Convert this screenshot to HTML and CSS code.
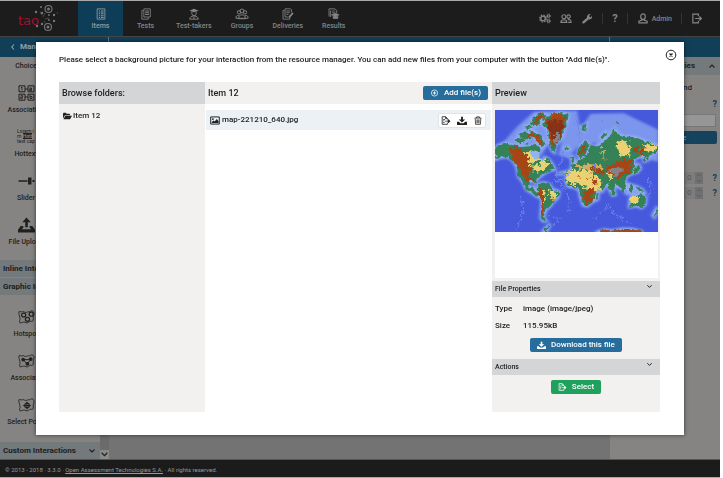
FILE: index.html
```html
<!DOCTYPE html>
<html lang="en">
<head>
<meta charset="utf-8">
<title>TAO - Resource manager</title>
<link rel="stylesheet" href="styles.css">
</head>
<body>
<svg class="sprite" aria-hidden="true">
  <symbol id="i-items" viewBox="0 0 12 14"><path d="M1.500 1h9v12h-9z" fill="none" stroke="currentColor"/><path d="M3.500 3.500h1.500M6 3.500h3M3.500 6h1.500M6 6h3M3.500 8.500h1.500M6 8.500h3M3.500 11h1.500M6 11h3" stroke="currentColor" stroke-width="1.300"/></symbol>
  <symbol id="i-tests" viewBox="0 0 12 14"><path d="M3.500 1h7.500v9.500h-7.500zM3 3H1.200v10h7.500v-2" fill="none" stroke="currentColor"/><path d="M5 3.500h4.500M5 5.500h4.500M5 7.500h4.500" stroke="currentColor" stroke-width="1.200"/></symbol>
  <symbol id="i-takers" viewBox="0 0 14 14"><path d="M7 1l5.500 2.200L7 5 1.500 3.200z" fill="currentColor"/><path d="M4.500 4.500v2a2.500 2.500 0 0 0 5 0v-2M2 13c.3-2.600 2-3.600 5-3.600s4.700 1 5 3.600zM6 11l1 1.500L8 11" fill="none" stroke="currentColor" stroke-width="1.100"/></symbol>
  <symbol id="i-groups" viewBox="0 0 16 14"><g fill="none" stroke="currentColor" stroke-width="1.100"><circle cx="4.500" cy="5" r="2"/><circle cx="11.500" cy="5" r="2"/><circle cx="8" cy="3.500" r="2.300"/><path d="M.8 12c0-2.500 1-3.500 3.700-3.500M15.200 12c0-2.500-1-3.500-3.700-3.500M4 12.500c0-3 1.300-4.500 4-4.500s4 1.500 4 4.500zM1 12h14"/></g></symbol>
  <symbol id="i-deliveries" viewBox="0 0 14 14"><path d="M9 10v3H1.200V3H3M3.500 1h6.500l1 1v3M3.500 1v9.500H7" fill="none" stroke="currentColor"/><path d="M5 3.500h4.500M5 5.500h4M5 7.500h2.500" stroke="currentColor"/><path d="M12 5l1.500 1.500L9.500 11 7.500 11.500 8 9.500z" fill="currentColor"/></symbol>
  <symbol id="i-results" viewBox="0 0 14 14"><path d="M1.200 10V1h7l2 2v3M3 10.500V3" fill="none" stroke="currentColor"/><path d="M4.500 3.500h4M4.500 5.500h4M4 8l4.500-1.800L13 8 8.500 9.800zM6 9.500v2.700h5.500V9.500" fill="currentColor" stroke="currentColor" stroke-width=".8"/></symbol>
  <symbol id="i-gears" viewBox="0 0 14 12"><circle cx="4.700" cy="6" r="2.700" fill="none" stroke="currentColor" stroke-width="1.600"/><circle cx="4.700" cy="6" r="4" fill="none" stroke="currentColor" stroke-width="1.400" stroke-dasharray="1.600 1.540"/><g fill="none" stroke="currentColor" stroke-width="1.200"><circle cx="11.200" cy="3" r="1.500"/><circle cx="11.200" cy="9" r="1.500"/></g><g fill="none" stroke="currentColor" stroke-width=".8" stroke-dasharray="1 1.100"><circle cx="11.200" cy="3" r="2.400"/><circle cx="11.200" cy="9" r="2.400"/></g></symbol>
  <symbol id="i-users" viewBox="0 0 14 12"><g fill="none" stroke="currentColor" stroke-width="1.300"><circle cx="4.500" cy="4" r="2.300"/><circle cx="10" cy="3.800" r="2"/><path d="M1 10.500c0-2.300 1-3 3.500-3s3.500.7 3.500 3zM9 7c3 0 4 1 4 3.500H9.500"/></g></symbol>
  <symbol id="i-wrench" viewBox="0 0 12 12"><path d="M1.200 9.400L6 5.200C5.500 3 7.500.7 10 1.300L8.300 3l.6 1.300 1.300.3L11.400 3c.8 2.300-1.300 4.500-3.700 4L3 11.200c-1.500.9-2.900-.8-1.800-1.800z" fill="currentColor"/></symbol>
  <symbol id="i-user" viewBox="0 0 12 12"><ellipse cx="6" cy="4" rx="2.500" ry="3" fill="none" stroke="currentColor" stroke-width="1.300"/><path d="M5 6.500v1.300L1.500 9v1.700h9V9L7 7.800V6.500" fill="none" stroke="currentColor" stroke-width="1.300"/></symbol>
  <symbol id="i-logout" viewBox="0 0 12 12"><path d="M7.500 3.500V1.200H1.500v9.600h6V8.500M4 6h6.500M8.500 3.800L10.800 6 8.500 8.200" fill="none" stroke="currentColor" stroke-width="1.300"/></symbol>
  <symbol id="i-up" viewBox="0 0 8 8"><path d="M1.500 5.500L4 3l2.500 2.500" fill="none" stroke="currentColor" stroke-width="1.100"/></symbol>
  <symbol id="i-down" viewBox="0 0 8 8"><path d="M1.500 2.500L4 5l2.500-2.500" fill="none" stroke="currentColor" stroke-width="1.100"/></symbol>
  <symbol id="i-left" viewBox="0 0 8 8"><path d="M5 1.500L2.800 4 5 6.500" fill="none" stroke="currentColor" stroke-width="1.100"/></symbol>
  <symbol id="i-download" viewBox="0 0 16 14"><path d="M6.500 1h3v4.500H13L8 10 3 5.500h3.500z" fill="currentColor"/><path d="M0 9h3l2.500 2.500h5L13 9h3v5H0z" fill="currentColor"/></symbol>
  <symbol id="i-upload" viewBox="0 0 16 14"><path d="M6.800 9V4.500H4L8 0l4 4.500H9.200V9z" fill="currentColor"/><path d="M0 11.500L2.500 8H5v1.500L3.500 11h9L11 9.500V8h2.500l2.500 3.500V14H0z" fill="currentColor"/></symbol>
  <symbol id="i-export" viewBox="0 0 14 13"><path d="M9 5V3.500L6.500 1H1.500v11H9v-2M6.300 1v2.800H9M3 5h2.500M3 7h1.500M3 9.500h2" fill="none" stroke="currentColor" stroke-width="1.200"/><path d="M5.500 7.500H11M10 5l3 2.500-3 2.500z" fill="currentColor" stroke="currentColor"/></symbol>
  <symbol id="i-trash" viewBox="0 0 12 13"><path d="M1 3h10M4 3V1.200h4V3M2 3.500l.5 8.500h7l.5-8.500M4.500 5v5.500M6 5v5.500M7.500 5v5.500" fill="none" stroke="currentColor" stroke-width="1.100"/></symbol>
  <symbol id="i-image" viewBox="0 0 14 12"><path d="M1 1h12v10H1z" fill="none" stroke="currentColor" stroke-width="1.400"/><circle cx="4" cy="4" r="1.300" fill="currentColor"/><path d="M2.500 9.500V8L5 6l1.500 1.500L9.500 4 12 7v2.500z" fill="currentColor"/></symbol>
  <symbol id="i-folder" viewBox="0 0 14 12"><path d="M0 10V2l1-1h3.500l1 1.500H10l1 1V5H3z" fill="currentColor"/><path d="M3.500 5.700H14L11 11H.7z" fill="currentColor"/></symbol>
  <symbol id="i-ring" viewBox="0 0 12 12"><circle cx="6" cy="6" r="4.800" fill="none" stroke="currentColor" stroke-width="1"/><path d="M4.500 4.500l3 3M7.500 4.500l-3 3" stroke="currentColor" stroke-width="1.300"/></symbol>
  <symbol id="i-add" viewBox="0 0 12 12"><circle cx="6" cy="6" r="4.600" fill="none" stroke="currentColor" stroke-width="1.100"/><path d="M6 3.700v4.600M3.700 6h4.600" stroke="currentColor" stroke-width="1.400"/></symbol>
  <symbol id="i-slider" viewBox="0 0 16 16"><path d="M0 7.200h9v1.600H0zM9.500 4.500h3.500v7H9.500zM14 7h2v2h-2z" fill="currentColor"/></symbol>
  <symbol id="i-map" viewBox="0 0 18 16"><path d="M1 2.500c1.500-1 2 .7 3.500 0s2 .5 3.500.7S10.500 2 12 2.500 13 1 15 1.500s2.500 3 1.500 5 .5 5.500-1 6-2-.5-3.500.5-2 1.500-3.500 1-2-1-4-.3-3 .8-2.800-.8.800-2.500.300-4.500S.5 4 1 2.500z" fill="none" stroke="currentColor" stroke-width=".9"/></symbol>
</svg>

<div class="app">
  <header class="topbar">
    <svg class="logo" viewBox="0 0 78 35" role="img" aria-label="tao">
      <g fill="none" stroke="#777" stroke-width="1.100"><circle cx="48.500" cy="8" r="3.500"/><circle cx="48" cy="26" r="3.500"/></g>
      <g fill="#777"><circle cx="48.500" cy="8" r="1.500"/><circle cx="48" cy="26" r="1.500"/><circle cx="41" cy="6" r="1"/><circle cx="36" cy="11" r="1.200"/><circle cx="42" cy="12" r="1.200"/><circle cx="37" cy="25" r="1.200"/><circle cx="42" cy="23" r="1.200"/><circle cx="54" cy="14" r="1.200"/><circle cx="54" cy="20" r="1.200"/><circle cx="49" cy="14" r=".9"/><circle cx="49" cy="19" r=".9"/><circle cx="57.500" cy="12" r=".5"/></g>
      <path d="M43 16l2-4M45 18l4-1M44 20l2 3M42 14l-2-3" stroke="#555" stroke-width=".8"/>
      <text x="18" y="24" class="logo-text">tao</text>
    </svg>
    <nav class="tabs">
      <a class="tab active" href="#items"><svg><use href="#i-items"/></svg>Items</a>
      <a class="tab" href="#tests"><svg><use href="#i-tests"/></svg>Tests</a>
      <a class="tab" href="#takers"><svg><use href="#i-takers"/></svg>Test-takers</a>
      <a class="tab" href="#groups"><svg><use href="#i-groups"/></svg>Groups</a>
      <a class="tab" href="#deliveries"><svg><use href="#i-deliveries"/></svg>Deliveries</a>
      <a class="tab" href="#results"><svg><use href="#i-results"/></svg>Results</a>
    </nav>
    <nav class="tools">
      <a href="#settings" aria-label="Settings"><svg><use href="#i-gears"/></svg></a>
      <a href="#users" aria-label="Users"><svg><use href="#i-users"/></svg></a>
      <a href="#tools" aria-label="Tools"><svg><use href="#i-wrench"/></svg></a>
      <a class="sep help" href="#help">?</a>
      <a class="sep user" href="#admin"><svg><use href="#i-user"/></svg>Admin</a>
      <a class="sep exit" href="#logout" aria-label="Log out"><svg><use href="#i-logout"/></svg></a>
    </nav>
  </header>

  <main class="workspace">
    <aside class="palette">
      <a class="bar" href="#manage"><svg><use href="#i-left"/></svg>Manage items</a>
      <div class="palette-body">
        <div class="palette-list">
          <div class="tiles first">
            <div class="tile short">Choice</div>
            <div class="tile"><svg viewBox="0 0 16 16"><g fill="none" stroke="currentColor"><path d="M.5.8h6v6h-6zM9.500.8h6v6h-6zM.5 9.200h6v6h-6zM9.500 9.200h6v6h-6zM6.500 4h3M6.500 12h3"/><path d="M2.500 3l1-1v3.500M11 3h2v2.500h-2V4h2M2.200 10.700h2v1.500h-2v1.500h2M11.500 10v3.500h2v-2h-2" stroke-width=".9"/></g></svg>Association</div>
            <div class="tile"><span class="hot">Lorem i<br>m <b>Hott</b><br>text cap</span>Hottext</div>
            <div class="tile"><svg><use href="#i-slider"/></svg>Slider</div>
            <div class="tile"><svg><use href="#i-upload"/></svg>File Upload</div>
          </div>
          <h2>Inline Interactions</h2>
          <h2>Graphic Interactions</h2>
          <div class="tiles">
            <div class="tile"><svg viewBox="0 0 18 16"><use href="#i-map"/><g fill="none" stroke="currentColor" stroke-width="1.300"><circle cx="6" cy="6" r="2.200"/><circle cx="14" cy="5" r="2.200"/><circle cx="10" cy="10.500" r="2.200"/></g></svg>Hotspot</div>
            <div class="tile"><svg viewBox="0 0 18 16"><use href="#i-map"/><path d="M5.500 6.500h8l-4 4.500z" stroke="currentColor" fill="none"/><g fill="currentColor"><circle cx="5.500" cy="6.500" r="2"/><circle cx="13.500" cy="6" r="2"/><circle cx="10" cy="11" r="2"/></g></svg>Associate</div>
            <div class="tile"><svg viewBox="0 0 18 16"><use href="#i-map"/><g fill="none" stroke="currentColor" stroke-width="1.200"><circle cx="9.500" cy="8.500" r="2.500"/><path d="M9.500 4.500v8M5.500 8.500h8"/></g></svg>Select Point</div>
          </div>
          <h2>Custom Interactions<svg><use href="#i-down"/></svg></h2>
        </div>
        <div class="scroll"><svg><use href="#i-down"/></svg></div>
      </div>
    </aside>
    <section class="canvas"><div class="bar"></div></section>
    <aside class="props">
      <div class="bar"></div>
      <h2>Interaction Properties<svg><use href="#i-up"/></svg></h2>
      <p>Background</p>
      <div class="field ask">?</div>
      <input class="path" type="text" aria-label="Background file">
      <button class="pick" type="button">Select image</button>
      <div class="field"><span class="spin">0<i><svg><use href="#i-up"/></svg><svg><use href="#i-down"/></svg></i></span>?</div>
      <div class="field"><span class="spin">0<i><svg><use href="#i-up"/></svg><svg><use href="#i-down"/></svg></i></span>?</div>
    </aside>
  </main>

  <footer class="foot">© 2013 - 2018 · 3.3.0 · <a href="#oat">Open Assessment Technologies S.A.</a> · All rights reserved.</footer>
</div>

<div class="modal" role="dialog" aria-label="Resource manager">
  <button class="close" type="button" aria-label="Close"><svg><use href="#i-ring"/></svg></button>
  <p class="intro">Please select a background picture for your interaction from the resource manager. You can add new files from your computer with the button "Add file(s)".</p>
  <div class="manager">
    <section class="folders">
      <h1>Browse folders:</h1>
      <a class="folder" href="#item12"><svg><use href="#i-folder"/></svg>Item 12</a>
    </section>
    <section class="files">
      <h1>Item 12 <button class="btn add" type="button"><svg><use href="#i-add"/></svg>Add file(s)</button></h1>
      <div class="file">
        <svg><use href="#i-image"/></svg><span>map-221210_640.jpg</span>
        <div class="acts">
          <button type="button" aria-label="Select"><svg><use href="#i-export"/></svg></button>
          <button type="button" aria-label="Download"><svg><use href="#i-download"/></svg></button>
          <button type="button" aria-label="Delete"><svg><use href="#i-trash"/></svg></button>
        </div>
      </div>
    </section>
    <section class="preview">
      <h1>Preview</h1>
      <div class="frame">
        <svg class="map" viewBox="14 29 489 367" preserveAspectRatio="none" role="img" aria-label="World map">
          <defs>
            <filter id="rough" x="-5%" y="-5%" width="110%" height="110%"><feTurbulence type="fractalNoise" baseFrequency=".07" numOctaves="3" seed="4" result="n"/><feDisplacementMap in="SourceGraphic" in2="n" scale="14" xChannelSelector="R" yChannelSelector="G"/></filter>
            <filter id="rough2" x="-5%" y="-5%" width="110%" height="110%"><feTurbulence type="fractalNoise" baseFrequency=".09" numOctaves="3" seed="9" result="n"/><feDisplacementMap in="SourceGraphic" in2="n" scale="26" xChannelSelector="R" yChannelSelector="G"/></filter>
            <filter id="soft"><feGaussianBlur stdDeviation="4"/></filter>
            <path id="lands" d="M22 136l20-8 25 6 22 6 30-2 18-5 13 14-12 14 4 14 14 9 6-13 12 5 12 16 8 16-22 5-12 8-16 12-10 14-6-5-12 1-3 14 10 7 8-5 3 14 12 11-6 6-14-11-18-11-10-22-14-18-4-25-10-20-16-12-20 0-20 8-8-8 18-6-12-6z
              M145 253l12-6 18 4 12 16 20 8-4 18-14 12-10 14-10 8-6 12-2 16 6 7-8 2-8-10 2-28 2-24-8-14-6-14z
              M163 54l20-12 30-7 22 8-4 20-8 22-6 22-12 17-10 14-3 19-8-8-6-18-4-24-4-22-14-14z
              M85 106l14-14 10 8 16 2-6 14-18 2zM126 56l14-14 22-4 8 8-16 14-10 14-14 4-8-10zM76 118l14-8 12 14-14 6zM120 88l16 8 16 14 14 22-6 9-12-9-13-18-14-8zM104 78l16-5 8 8-18 7z
              M262 163l8-26 14-14 14 8-8 18-6 20-14 6zM222 143l11-3 4 6-10 3zM241 172l7-4 7 17-9 4z
              M242 210l2-16 13-2 5-10 16-7 12-11 9-30 12 6 18-8 16-14 16-12 10-22 16 20 22 5 26 2 28 11 34 12 18 2-6 12-14 9-18 6-4 16-12-12-18 4-14 8 6 18-10 20-12 9-10 14 6 16-10 12-14-6-8-10-6 18 4 14-8 2-10-18-2-16-10 4-8 18-10-4-8-23-8-5-12 14-20 8-14-30 4-8-18 0-8-10-12 2-4 8-12-10-16 8z
              M231 226l18-14 24-3 18 8 16 2 12 26 17 8-16 20-6 16-8 17-16 13-12-4-8-24-3-20-14-9-20-3-7-16z
              M319 281l6-3-3 20-6 3zM419 297l12-12 14 2 6-8 16 16-2 18-12 11-14-7-22 4zM487 346l12-22 3 4-10 24zM389 249l8 3 12 18-6 2-12-14zM417 252l10 4-2 20-9-6zM437 263l18 4 8 11-12-2zM445 192l6 12-10 12-14 4zM460 160l5 18-4 10zM158 394l18-20 2 3-10 19zM320 396l20-7 26 3 30-5 30 1 28 6v6H320zM273 79l16-10-5 24zM330 110l18-16 2 5-14 18z"/>
            <clipPath id="landclip"><use href="#lands"/></clipPath>
          </defs>
          <rect x="14" y="29" width="489" height="367" fill="#4659dc"/>
          <g filter="url(#soft)" fill="#91adf3" stroke="#91adf3">
            <path d="M80 80L130 35l130-4 10 60 30-50 100-2 104 50v95l-50-10-100-40-80-10-40 50-30-10 10-40-30-10-30 50-60 30-70-50z" opacity=".72"/>
            <use href="#lands" stroke-width="9"/>
            <path d="M380 245l65 10 20 40-60-10z" opacity=".8"/>
          </g>
          <g filter="url(#rough2)" fill="none" stroke="#6d88ec" stroke-width="3"><path d="M220 150l-8 40-15 30 20 40 24 40-8 40M90 290l10 40-20 60M350 310l20 30 50 30M350 320l-40 40M470 230l15 40-20 40M220 230l-30 20M160 345l50 10-20 18-30 10M255 45l15 80"/></g>
          <g filter="url(#rough)">
            <use href="#lands" fill="#348158"/>
            <g clip-path="url(#landclip)"><g filter="url(#rough2)">
              <path d="M100 155l60 10 15 35-35 22-30-34zM228 212h76l30 34-4 24-26 4-50-14-30-20zM380 122l34 4 8 36-34 10zM415 285l20 2 15 18-36 10zM155 270l12 8-8 40zM178 270l22 6-4 26-16-2zM455 135l45-5v20l-40 6zM345 215h24l-6 25z" fill="#ead273"/>
              <path d="M260 194l60-2 20 10-10 8-70-4zM330 150l8-16 4 46z" fill="#cfae61"/>
              <path d="M52 145l30-4 20 23 14 10 4 28-4 30 24 20-24-2-40-50-12-40zM155 50l20 6 20-16 30 8-4 28-10 50-15 24-24-46-6-36zM130 54l28-12 5 12-30 18zM120 95l40 35-8 9-38-34zM146 260l12 10v75l-10-8zM281 276l30-10-4 38-20 16-10-20zM303 215l17 30-9 12zM345 203l56-28 25 8-10 30-35 24-34-22zM295 201l50 8-3 12-46-11zM430 140l36 8-16 20-18-13zM320 384h130v14H320zM282 130l4 16-17 18-5-2zM487 330l8 18z" fill="#a64516"/>
              <path d="M166 65l40-8 13 15-9 45-15 17-18-42z" fill="#853018"/>
              <path d="M198 92l12 8-2 25-10 14-8-20zM354 208l26-8 20 10-22 12-20-3z" fill="#858289"/>
              <path d="M262 230l8 4M290 232l10 3M320 288l3 8M440 155l10 4M190 288l-8 12" stroke="#b7621e" stroke-width="5"/>
              <path d="M245 248l30 6 14 10-10 8-14-8zM120 190l16-10 12 10-20 12z" fill="#348158"/>
            </g></g>
            <path d="M118 157l16-10 12 10 2 16-10 4-14-8z" fill="#8fb5ef"/><path d="M308 191l8 1 2 15-8-4z" fill="#6586e6"/>
            <g fill="#348158"><circle cx="104" cy="95" r="5"/><circle cx="120" cy="115" r="6"/><circle cx="96" cy="122" r="6"/><circle cx="110" cy="130" r="4"/><circle cx="382" cy="68" r="5"/><circle cx="397" cy="271" r="5"/><circle cx="336" cy="62" r="3"/></g>
          </g>
        </svg>
      </div>
      <h2>File Properties<svg><use href="#i-down"/></svg></h2>
      <dl><dt>Type</dt><dd>image (image/jpeg)</dd><dt>Size</dt><dd>115.95kB</dd></dl>
      <div class="center"><button class="btn" type="button"><svg><use href="#i-download"/></svg>Download this file</button></div>
      <h2 class="second">Actions<svg><use href="#i-down"/></svg></h2>
      <div class="center"><button class="btn select" type="button"><svg><use href="#i-export"/></svg>Select</button></div>
    </section>
  </div>
</div>
</body>
</html>
```
FILE: styles.css
```css
* { box-sizing: border-box; }
body { margin: 0; font: 500 8px/12px Roboto, "Liberation Sans", sans-serif; color: #222; background: #fff; }
h1, h2, p, dl, dd { margin: 0; font-size: 8px; }
a { color: inherit; text-decoration: none; }
button { font: inherit; color: inherit; border: 0; padding: 0; background: none; }
svg { flex: none; display: block; }
.sprite { position: absolute; width: 0; height: 0; }

.app { height: 100vh; margin-right: 3px; padding: 1px 0; display: flex; flex-direction: column; background: #aaa; }
.topbar { height: 36px; flex: none; display: flex; background: #1c1c1c; color: #858585; border-bottom: 1px solid #444; }
.logo { width: 78px; height: 35px; }
.logo-text { font: 400 13px "DejaVu Sans", sans-serif; fill: #a01030; }
.tabs { display: flex; }
.tab { min-width: 45px; padding: 7px 7px 0; display: flex; flex-direction: column; align-items: center; gap: 1px; font-size: 7px; line-height: 10px; }
.tab + .tab + .tab { padding: 7px 8px 0; }
.tab svg { width: 14px; height: 12px; }
.tab.active { background: #0e3d58; color: #999; }
.tools { margin-left: auto; padding-right: 17px; display: flex; align-items: center; gap: 9px; }
.tools svg { width: 12px; height: 11px; }
.sep { display: flex; align-items: center; gap: 3px; height: 11px; padding-left: 9px; border-left: 1px solid #333; font-size: 7px; }
.help { font-size: 11px; font-weight: 700; }

.workspace { flex: 1; min-height: 0; display: grid; grid-template-columns: 109px 1fr 110px; background: #737373; overflow: hidden; }
.bar { height: 20px; display: flex; align-items: center; background: #123f58; color: #8fa1ac; font-weight: 700; }
.palette { display: flex; flex-direction: column; min-height: 0; color: #202020; }
.palette .bar { padding-left: 9px; gap: 3px; border-right: 1px solid #5d7888; }
.bar svg { width: 8px; height: 8px; }
.palette-body { flex: 1; display: flex; background: #868482; }
.palette-list { flex: 1; display: flex; flex-direction: column; gap: 1px; }
.tiles { padding: 2px 0 11px; }
.tiles.first { padding: 0 0 9px; }
.tile { width: 52px; height: 44px; padding-top: 11px; display: flex; flex-direction: column; align-items: center; gap: 4px; font-size: 7px; line-height: 10px; white-space: nowrap; }
.tile.short { height: 17px; padding-top: 4px; }
.tile svg { width: 17px; height: 16px; }
.hot { height: 16px; font-size: 5px; line-height: 5px; font-weight: 400; }
.hot b { background: #222; color: #868482; }
.palette h2, .props h2 { height: 17px; display: flex; align-items: center; justify-content: space-between; padding: 0 4px 0 3px; background: #74797c; white-space: nowrap; }
.palette h2 svg, .props h2 svg { width: 8px; height: 8px; }
.scroll { width: 9px; background: #6b6b6b; display: flex; align-items: flex-end; }
.scroll svg { width: 9px; height: 9px; background: #8a8a8a; }
.canvas .bar { border-right: 1px solid #5d7888; }
.props { background: #868482; color: #222; text-align: right; }
.props h2 { height: 18px; justify-content: flex-end; gap: 13px; background: #74797c; }
.props p { padding: 7px 28px 0 0; font-weight: 500; }
.field { height: 15px; padding-right: 3px; display: flex; justify-content: flex-end; align-items: center; gap: 10px; color: #123f58; font-size: 9px; font-weight: 700; }
.field.ask { height: 20px; }
.path { display: block; width: 100px; height: 13px; margin: 0 4px 4px auto; border: 1px solid #777; background: #969696; }
.pick { display: block; width: 100px; height: 13px; margin: 0 3px 26px auto; border-radius: 2px; background: #15435e; color: #8fa1ac; padding-right: 8px; }
.spin { display: flex; align-items: center; gap: 3px; height: 12px; width: 60px; justify-content: flex-end; background: #7d7d7d; color: #555; font-size: 8px; font-weight: 400; }
.spin i { background: #707070; }
.spin svg { width: 8px; height: 6px; }
.foot { height: 18px; flex: none; padding-left: 5px; background: #1b1b1b; color: #999; border-top: 1px solid #555; font-size: 6px; line-height: 19px; font-weight: 400; }
.foot a { text-decoration: underline; }

.modal { position: fixed; inset: 42px 39px 43px 36px; padding: 12px 24px 23px 23px; display: flex; flex-direction: column; background: #fff; box-shadow: 0 0 4px rgba(0, 0, 0, .6); color: #222; }
.close { position: absolute; top: 7px; right: 7px; }
.close svg { width: 12px; height: 12px; }
.intro { padding-bottom: 16px; }
.manager { flex: 1; display: grid; grid-template-columns: 146px 1fr 168px; }
.manager h1 { height: 22px; padding: 0 4px 0 3px; display: flex; align-items: center; justify-content: space-between; background: #d3d5d6; font-size: 9px; font-weight: 500; }
.folders, .preview { background: #f2f1ef; }
.folder { display: flex; align-items: center; gap: 1px; padding: 6px 4px; }
.folder svg { width: 9px; height: 8px; }
.files h1 { background: #f2f1ef; }
.btn { height: 14px; padding: 0 7px; display: inline-flex; align-items: center; gap: 5px; border-radius: 2px; background: #266d9c; color: #fff; font-size: 8px; font-weight: 500; }
.btn svg { width: 9px; height: 8px; }
.file { height: 20px; margin: 6px 1px 0; padding: 0 5px 0 4px; display: flex; align-items: center; gap: 2px; background: #ebf1f5; }
.file > svg { width: 10px; height: 9px; }
.acts { margin-left: auto; height: 15px; padding: 0 2px; display: flex; align-items: center; gap: 6px; background: #fff; border: 1px solid #e0e4e6; border-radius: 2px; }
.acts svg { width: 10px; height: 9px; }
.frame { height: 168px; margin: 6px 2px 3px 3px; background: #fff; }
.map { width: 100%; height: 122px; }
.preview h2 { height: 16px; padding: 0 7px 0 3px; display: flex; align-items: center; justify-content: space-between; background: #d3d5d6; font-size: 7px; font-weight: 500; }
.preview h2 svg { width: 7px; height: 7px; margin-bottom: 5px; }
.preview dl { padding: 6px 3px 6px; display: grid; grid-template-columns: 28px 1fr; row-gap: 5px; }
.center { text-align: center; display: flex; justify-content: center; }
.preview .second { margin: 7px 0 5px; }
.select { background: #1fa15d; }
```
